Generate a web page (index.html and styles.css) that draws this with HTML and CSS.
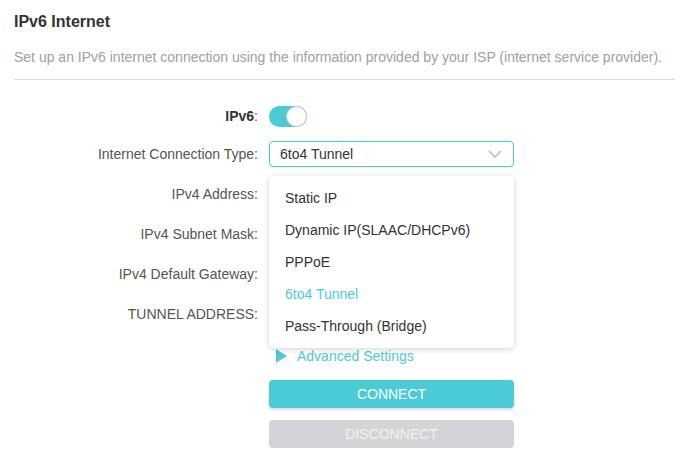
FILE: index.html
```html
<!DOCTYPE html>
<html>
<head>
<meta charset="utf-8">
<link rel="stylesheet" href="styles.css">
</head>
<body>
<div class="page">
  <div class="header">
    <h1 class="title">IPv6 Internet</h1>
    <p class="desc">Set up an IPv6 internet connection using the information provided by your ISP (internet service provider).</p>
  </div>
  <div class="form">
    <div class="row row-first">
      <label class="label bold">IPv6<span class="colon">:</span></label>
      <div class="control">
        <span class="toggle"><span class="knob"></span></span>
      </div>
    </div>
    <div class="row">
      <label class="label">Internet Connection Type:</label>
      <div class="control select-wrap">
        <div class="select">
          <span>6to4 Tunnel</span>
          <svg class="chev" width="14" height="8" viewBox="0 0 14 8"><path d="M1 1 L7 7 L13 1" fill="none" stroke="#bdbdbd" stroke-width="1.6"/></svg>
        </div>
        <ul class="menu">
          <li>Static IP</li>
          <li>Dynamic IP(SLAAC/DHCPv6)</li>
          <li>PPPoE</li>
          <li class="active">6to4 Tunnel</li>
          <li>Pass-Through (Bridge)</li>
        </ul>
      </div>
    </div>
    <div class="row">
      <label class="label">IPv4 Address:</label>
      <div class="control"></div>
    </div>
    <div class="row">
      <label class="label">IPv4 Subnet Mask:</label>
      <div class="control"></div>
    </div>
    <div class="row">
      <label class="label">IPv4 Default Gateway:</label>
      <div class="control"></div>
    </div>
    <div class="row">
      <label class="label">TUNNEL ADDRESS:</label>
      <div class="control"></div>
    </div>
    <div class="row row-adv">
      <span class="label"></span>
      <div class="control adv">
        <svg class="tri" width="11" height="14" viewBox="0 0 11 14"><path d="M0 0 L11 7 L0 14 Z" fill="#4acbd6"/></svg>
        <span>Advanced Settings</span>
      </div>
    </div>
    <div class="row row-btn">
      <span class="label"></span>
      <div class="control"><button class="btn connect">CONNECT</button></div>
    </div>
    <div class="row row-btn2">
      <span class="label"></span>
      <div class="control"><button class="btn disconnect">DISCONNECT</button></div>
    </div>
  </div>
</div>
</body>
</html>
```
FILE: styles.css
```css
* { box-sizing: border-box; }
html, body { margin: 0; padding: 0; background: #fff; }
body { font-family: "Liberation Sans", Arial, sans-serif; color: #333; font-size: 14px; }
.page { padding: 12px 14px 0 14px; }
.header { border-bottom: 1px solid #dcdcdc; padding-bottom: 12px; }
.title { margin: 0; font-size: 16px; line-height: 20px; font-weight: bold; color: #333; }
.desc { margin: 15px 0 0 0; font-size: 14px; line-height: 20px; color: #a0a0a0; }
.form { padding-top: 18px; }
.row { display: flex; align-items: center; height: 40px; }
.row-first { height: 36px; }
.label { width: 244px; flex: none; text-align: right; color: #555; line-height: 20px; }
.label.bold { font-weight: bold; color: #333; }
.colon { font-weight: normal; color: #555; }
.control { width: 245px; margin-left: 11px; position: relative; }
.toggle { display: block; width: 38px; height: 21px; border-radius: 11px; background: #4acbd6; position: relative; }
.knob { position: absolute; right: 0; top: 0; width: 21px; height: 21px; border-radius: 50%; background: #fff; border: 1px solid #c8c8c8; }
.select { height: 26px; border: 1px solid #4acbd6; border-radius: 4px; display: flex; align-items: center; justify-content: space-between; padding: 0 11px 0 10px; color: #333; }
.chev { display: block; }
.menu { position: absolute; left: 0; top: 35px; width: 245px; margin: 0; padding: 6px 0; list-style: none; background: #fff; border-radius: 5px; box-shadow: 0 1px 6px rgba(0,0,0,0.18); z-index: 5; }
.menu li { height: 32px; line-height: 32px; padding-left: 16px; color: #333; }
.menu li.active { color: #4acbd6; }
.row-adv { height: 44px; }
.adv { display: flex; align-items: center; padding-left: 7px; color: #4acbd6; }
.tri { margin-right: 10px; }
.row-btn { height: 32px; margin-top: 0; }
.row-btn2 { height: 28px; margin-top: 10px; }
.btn { display: block; width: 245px; height: 28px; border: none; border-radius: 4px; font-family: "Liberation Sans", Arial, sans-serif; font-size: 14px; color: #fff; padding: 0; }
.connect { background: #4acbd6; box-shadow: 0 2px 3px rgba(0,0,0,0.15); }
.disconnect { background: #d4d4d8; color: #f2f2f2; }
```
